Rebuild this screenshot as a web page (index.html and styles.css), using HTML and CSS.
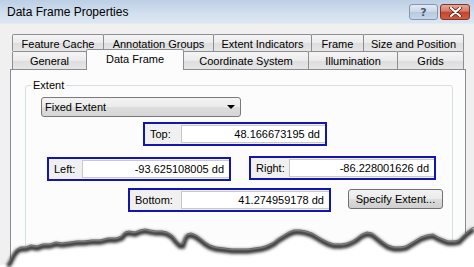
FILE: index.html
```html
<!DOCTYPE html>
<html>
<head>
<meta name="viewport" content="width=device-width, initial-scale=1.0">
<link rel="stylesheet" href="styles.css">
<title>Data Frame Properties</title>
</head>
<body>
<div class="window">
  <div class="titlebar">
    <span class="title">Data Frame Properties</span>
    <div class="caption">
      <span class="cap-btn help">?</span>
      <span class="cap-btn close">
        <svg width="13" height="10" viewBox="0 0 13 10"><path d="M2 1 L11 9 M11 1 L2 9" stroke="#5a1a10" stroke-width="3.6" stroke-linecap="round"/><path d="M2 1 L11 9 M11 1 L2 9" stroke="#fff" stroke-width="2.2" stroke-linecap="round"/></svg>
      </span>
    </div>
  </div>

  <div class="tabs">
    <div class="tab-row">
      <div class="tab w-fc">Feature Cache</div>
      <div class="tab w-ag">Annotation Groups</div>
      <div class="tab w-ei">Extent Indicators</div>
      <div class="tab w-fr">Frame</div>
      <div class="tab w-sp">Size and Position</div>
    </div>
    <div class="tab-row front">
      <div class="tab w-ge">General</div>
      <div class="tab w-df selected">Data Frame</div>
      <div class="tab w-cs">Coordinate System</div>
      <div class="tab w-il">Illumination</div>
      <div class="tab w-gr">Grids</div>
    </div>
  </div>

  <div class="panel">
    <fieldset class="group">
      <legend>Extent</legend>
      <div class="combo">Fixed Extent<span class="arrow"></span></div>

      <div class="row row-top">
        <div class="coord c-top"><span class="lbl">Top:</span><span class="val">48.166673195 dd</span></div>
      </div>
      <div class="row row-mid">
        <div class="coord c-left"><span class="lbl">Left:</span><span class="val">-93.625108005 dd</span></div>
        <div class="coord c-right"><span class="lbl">Right:</span><span class="val">-86.228001626 dd</span></div>
      </div>
      <div class="row row-bot">
        <div class="coord c-bottom"><span class="lbl">Bottom:</span><span class="val">41.274959178 dd</span></div>
        <div class="button">Specify Extent...</div>
      </div>
    </fieldset>
  </div>

  <svg class="tear" width="474" height="52" viewBox="0 215 474 52">
    <defs>
      <filter id="soft" x="-5%" y="-50%" width="110%" height="200%"><feGaussianBlur stdDeviation="1.4"/></filter>
    </defs>
    <polygon fill="#fff" points="0,267 0,265 8,264 11,259 14,253 17,249 21,247 26,247 31,245 37,246 43,244 50,244 56,242 62,243 70,242 77,241 84,241 92,240 100,240 108,238 116,238 122,236 125,232 129,231 135,232 140,230 145,229 150,230 156,231 162,231 167,232 172,235 176,240 180,244 183,244 185,238 187,234 191,233 196,235 200,238 205,242 210,245 216,247 224,248 232,249 240,249 248,249 255,248 262,247 268,245 274,242 279,238 284,235 289,232 294,230 300,230 306,231 312,233 317,236 322,239 328,242 334,244 341,244 347,243 352,241 357,238 362,234 367,232 372,233 377,237 382,241 388,245 394,247 400,247 406,246 411,243 416,240 421,237 427,235 433,234 438,237 443,239 448,241 454,241 459,240 463,236 467,232 471,229 474,227 474,267"/>
    <polyline fill="none" stroke="#2e2e2e" stroke-width="4.5" filter="url(#soft)" transform="translate(0,2.6)" points="8,264 11,259 14,253 17,249 21,247 26,247 31,245 37,246 43,244 50,244 56,242 62,243 70,242 77,241 84,241 92,240 100,240 108,238 116,238 122,236 125,232 129,231 135,232 140,230 145,229 150,230 156,231 162,231 167,232 172,235 176,240 180,244 183,244 185,238 187,234 191,233 196,235 200,238 205,242 210,245 216,247 224,248 232,249 240,249 248,249 255,248 262,247 268,245 274,242 279,238 284,235 289,232 294,230 300,230 306,231 312,233 317,236 322,239 328,242 334,244 341,244 347,243 352,241 357,238 362,234 367,232 372,233 377,237 382,241 388,245 394,247 400,247 406,246 411,243 416,240 421,237 427,235 433,234 438,237 443,239 448,241 454,241 459,240 463,236 467,232 471,229 474,227"/>
    <polyline fill="none" stroke="#6a6a6a" stroke-width="1" points="8,264 11,259 14,253 17,249 21,247 26,247 31,245 37,246 43,244 50,244 56,242 62,243 70,242 77,241 84,241 92,240 100,240 108,238 116,238 122,236 125,232 129,231 135,232 140,230 145,229 150,230 156,231 162,231 167,232 172,235 176,240 180,244 183,244 185,238 187,234 191,233 196,235 200,238 205,242 210,245 216,247 224,248 232,249 240,249 248,249 255,248 262,247 268,245 274,242 279,238 284,235 289,232 294,230 300,230 306,231 312,233 317,236 322,239 328,242 334,244 341,244 347,243 352,241 357,238 362,234 367,232 372,233 377,237 382,241 388,245 394,247 400,247 406,246 411,243 416,240 421,237 427,235 433,234 438,237 443,239 448,241 454,241 459,240 463,236 467,232 471,229 474,227"/>
  </svg>
</div>
</body>
</html>
```

FILE: styles.css
```css
body{
margin:0;
background:#fff;
}
.window{
position:relative;
width:474px;
height:267px;
overflow:hidden;
background:#f0f0f0;
font-family:"Liberation Sans", Arial, sans-serif;
font-size:11px;
color:#000;
}
.titlebar{
height:24px;
display:flex;
align-items:center;
background:linear-gradient(#bccfe5, #d3e0ef 60%, #dbe6f2);
border-bottom:1px solid #e4ebf3;
box-sizing:border-box;
}
.title{
margin-left:7px;
font-size:12px;
color:#000;
}
.caption{
margin-left:auto;
margin-right:4px;
display:flex;
gap:2px;
align-self:flex-start;
margin-top:4px;
}
.cap-btn{
height:16px;
box-sizing:border-box;
border-radius:3px;
display:flex;
align-items:center;
justify-content:center;
}
.help{
width:29px;
border:1px solid #8497ae;
background:linear-gradient(#e3ebf4, #c9d7e7 50%, #b8cade 51%, #c7d6e8);
color:#4a5a70;
font-family:"DejaVu Sans", sans-serif;
font-size:11px;
font-weight:bold;
}
.close{
width:30px;
border:1px solid #7e3426;
background:linear-gradient(#e8a898, #d57a65 45%, #c5442c 50%, #d25c44);
}
.tabs{
margin-top:10px;
margin-left:12px;
}
.tab-row{
display:flex;
height:17px;
align-items:flex-end;
}
.tab-row.front{
height:18px;
}
.tab{
box-sizing:border-box;
height:100%;
border:1px solid #8c8e94;
border-bottom:none;
border-radius:2px 2px 0 0;
background:linear-gradient(#f5f5f5, #ebebeb 50%, #dddddd 51%, #e6e6e6);
display:flex;
align-items:center;
justify-content:center;
padding-top:1px;
margin-right:-1px;
}
.tab.selected{
position:relative;
z-index:1;
height:21px;
margin-bottom:-1px;
background:#fcfcfc;
align-items:flex-start;
padding-top:3px;
}
.w-fc{width:92px;}
.w-ag{width:111px;}
.w-ei{width:99px;}
.w-fr{width:53px;}
.w-sp{width:101px;}
.w-ge{width:75px;}
.w-df{width:98px;}
.w-cs{width:126px;}
.w-il{width:90px;}
.w-gr{width:67px;}
.panel{
margin-left:10px;
width:456px;
height:220px;
box-sizing:border-box;
border:1px solid #898c95;
background:#fcfcfc;
padding-top:9px;
}
.group{
margin:0 0 0 14px;
width:428px;
height:200px;
box-sizing:border-box;
padding:0;
border:1px solid #d5dfe5;
border-radius:3px;
}
.group legend{
margin-left:5px;
padding:0 2px;
line-height:13px;
}
.combo{
margin:5px 0 0 15px;
width:200px;
height:20px;
box-sizing:border-box;
border:1px solid #7a7a7a;
border-radius:3px;
background:linear-gradient(#f3f3f3, #ebebeb 50%, #dddddd 51%, #d6d6d6);
display:flex;
align-items:center;
padding-left:3px;
}
.arrow{
margin-left:auto;
margin-right:5px;
width:0;
height:0;
border-left:4px solid transparent;
border-right:4px solid transparent;
border-top:4px solid #000;
}
.row{
display:flex;
align-items:flex-start;
}
.row-top{
margin:5px 0 0 117px;
}
.row-mid{
margin:11px 0 0 21px;
gap:18px;
}
.row-bot{
margin:7px 0 0 102px;
gap:17px;
}
.coord{
display:flex;
height:24px;
box-sizing:border-box;
border:2px solid #1414b0;
background:#f0f0f0;
}
.lbl{
box-sizing:border-box;
padding-left:5px;
display:flex;
align-items:center;
}
.val{
flex:1;
margin:1px 0;
border:1px solid #c9c9c9;
border-right:none;
background:#fff;
display:flex;
align-items:center;
justify-content:flex-end;
padding-right:5px;
}
.c-top{width:184px;}
.c-top .lbl{width:36px;}
.c-left{width:184px;}
.c-left .lbl{width:33px;}
.c-right{width:187px;margin-top:-1px;}
.c-right .lbl{width:38px;}
.c-bottom{width:203px;}
.c-bottom .lbl{width:51px;}
.button{
margin-top:1px;
width:95px;
height:20px;
box-sizing:border-box;
border:1px solid #707070;
border-radius:3px;
background:linear-gradient(#f2f2f2, #ebebeb 50%, #dddddd 51%, #cfcfcf);
display:flex;
align-items:center;
justify-content:center;
}
.tear{
position:absolute;
left:0;
top:215px;
}
```
